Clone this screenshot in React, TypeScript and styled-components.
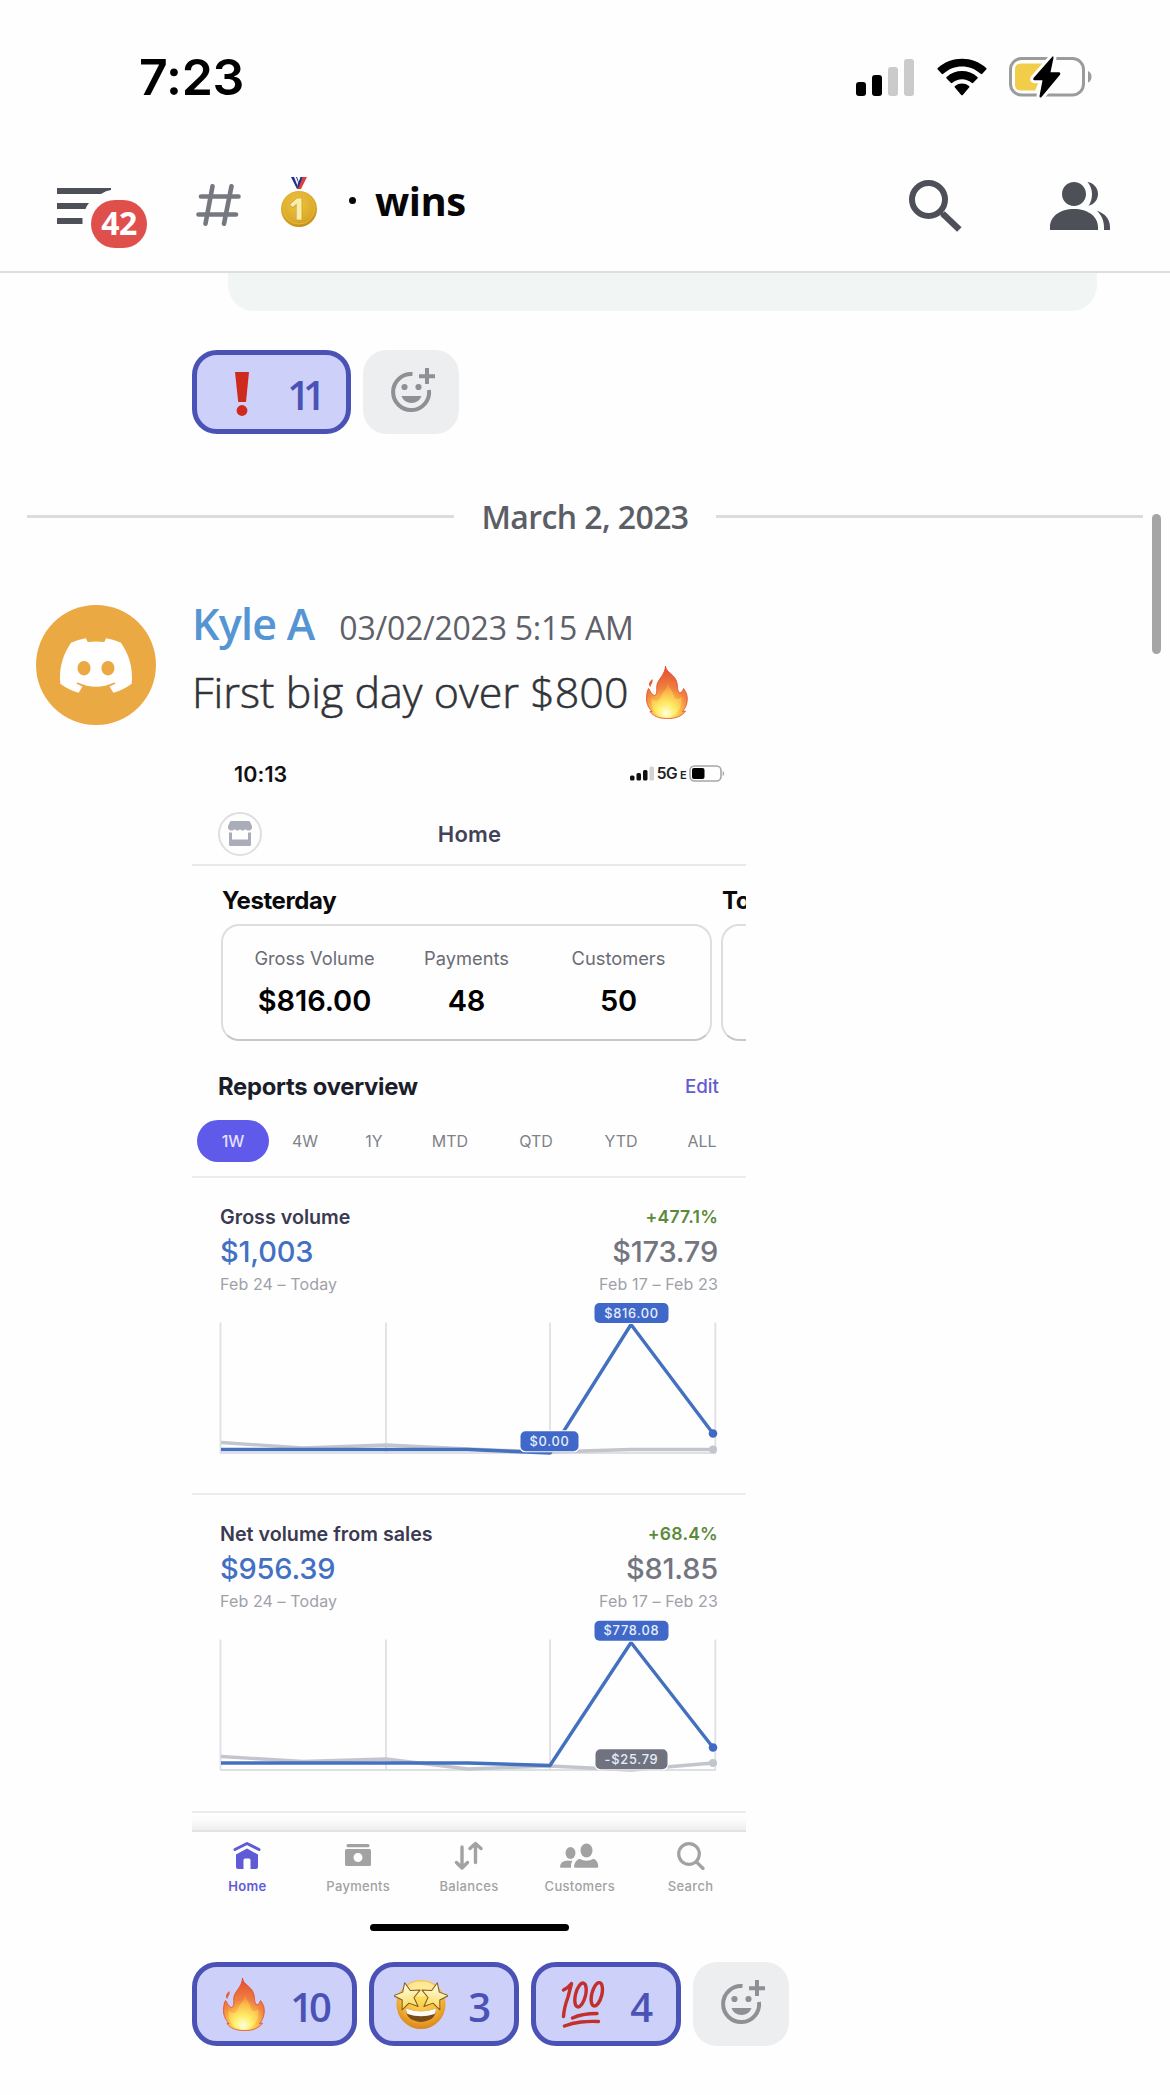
import React from "react";
import styled, { createGlobalStyle } from "styled-components";

const GlobalStyle = createGlobalStyle`
  * { box-sizing: border-box; }
  html, body { margin: 0; background: #fff; }
  body { font-family: "Open Sans", "Noto Sans", sans-serif; }
  svg { display: block; flex: none; }
`;

const ui = `Inter, "Liberation Sans", sans-serif`;

const Screen = styled.div`
  position: relative;
  width: 1170px;
  height: 2095px;
  overflow: hidden;
  background: #fefefe;
`;

/* ---------- phone status bar ---------- */

const StatusBar = styled.div`
  display: flex;
  align-items: center;
  justify-content: space-between;
  height: 137px;
  padding: 17px 75px 0 139px;
`;

const Clock = styled.span`
  font: 600 50px/60px ${ui};
  letter-spacing: -0.2px;
  color: #000;
`;

const StatusIcons = styled.div`
  display: flex;
  align-items: center;
  gap: 22.5px;
`;

/* ---------- channel header ---------- */

const Header = styled.header`
  display: flex;
  align-items: center;
  height: 136px;
  padding: 0 54px 0 57px;
  border-bottom: 2px solid #dddee0;
`;

const MenuButton = styled.div`
  position: relative;
  width: 90px;
  height: 72px;
`;

const Badge = styled.span`
  position: absolute;
  left: 34px;
  top: 32px;
  width: 56px;
  height: 48px;
  border-radius: 24px;
  background: #df504c;
  color: #fff;
  font: 700 32px/46px "Open Sans", sans-serif;
  letter-spacing: -0.5px;
  text-align: center;
`;

const HashSlot = styled.div`
  margin: 2px 0 0 49px;
`;

const MedalSlot = styled.div`
  margin: -4px 0 0 40px;
`;

const ChannelName = styled.h1`
  display: flex;
  margin: -6px 0 0 32px;
  gap: 19px;
  font: 700 40px/56px "Open Sans", sans-serif;
  letter-spacing: -0.5px;
  color: #060607;
`;

const ChannelDot = styled.span`
  width: 7px;
  height: 7px;
  margin-top: 24px;
  border-radius: 50%;
  background: #060607;
`;

const HeaderActions = styled.div`
  display: flex;
  align-items: center;
  gap: 69px;
  margin: 3px 0 0 auto;
`;

/* ---------- chat ---------- */

const EmbedTail = styled.div`
  width: 869px;
  height: 38px;
  margin-left: 228px;
  border-radius: 0 0 26px 26px;
  background: #f1f5f4;
`;

const Reactions = styled.div<{ $top: number }>`
  display: flex;
  gap: 12px;
  margin: ${(p) => p.$top}px 0 0 192px;
`;

const Reaction = styled.div<{ $width: number }>`
  display: flex;
  align-items: center;
  justify-content: space-between;
  width: ${(p) => p.$width}px;
  height: 84px;
  padding: 0 23px 0 19px;
  border: 5px solid #4b52b5;
  border-radius: 25px;
  background: #cdd0f8;
  color: #4b52b5;
`;

const EmojiSlot = styled.span<{ $shift?: number }>`
  display: flex;
  justify-content: center;
  width: 55px;
  padding-top: ${(p) => (p.$shift ? 4 : 0)}px;
  padding-right: ${(p) => p.$shift ?? 0}px;
`;

const Count = styled.span<{ $tight?: number }>`
  margin-right: ${(p) => (p.$tight ? p.$tight - 3 : 0)}px;
  padding-top: 5px;
  font: 600 40px/56px "Open Sans", sans-serif;
  letter-spacing: ${(p) => -(p.$tight ?? 0)}px;
`;

const AddReaction = styled.div`
  display: flex;
  justify-content: center;
  width: 96px;
  height: 84px;
  padding: 16px 0 0 2px;
  border-radius: 24px;
  background: #edeef0;
`;

const DateDivider = styled.div`
  display: flex;
  align-items: center;
  gap: 27px;
  height: 40px;
  margin: 62px 27px 0;
  font: 600 32px/40px "Open Sans", sans-serif;
  letter-spacing: -0.6px;
  color: #5c5e66;
  &::before,
  &::after {
    content: "";
    flex: 1;
    height: 3px;
    background: #dcdcde;
  }
`;

const DateLabel = styled.span`
  padding-top: 1px;
`;

const Message = styled.article`
  display: flex;
  gap: 36px;
  margin: 61px 0 0 36px;
`;

const Avatar = styled.div`
  display: flex;
  align-items: center;
  justify-content: center;
  width: 120px;
  height: 120px;
  margin-top: 8px;
  border-radius: 50%;
  background: #eaa942;
`;

const Author = styled.div`
  display: flex;
  align-items: baseline;
  gap: 25px;
  height: 52px;
  padding-top: 1px;
`;

const AuthorName = styled.span`
  font: 600 43px/52px "Open Sans", sans-serif;
  letter-spacing: -0.75px;
  color: #5595d3;
`;

const Timestamp = styled.time`
  font: 400 32px/52px "Open Sans", sans-serif;
  letter-spacing: -0.25px;
  color: #5f6168;
`;

const MessageText = styled.p`
  display: flex;
  align-items: center;
  gap: 18px;
  height: 60px;
  margin: 13px 0 23px;
  font: 300 43px/60px "Open Sans", sans-serif;
  -webkit-text-stroke: 0.55px #313338;
  color: #313338;
`;

const ScrollThumb = styled.div`
  position: absolute;
  right: 9px;
  top: 514px;
  width: 9px;
  height: 140px;
  border-radius: 5px;
  background: #a5a5a5;
`;

/* ---------- attached phone capture ---------- */

const Attachment = styled.section`
  width: 554px;
  height: 1201px;
  overflow: hidden;
  font-family: ${ui};
  background: #fefefe;
`;

const MiniStatus = styled.div`
  display: flex;
  align-items: center;
  justify-content: space-between;
  height: 57px;
  padding: 0 21px 0 42px;
`;

const MiniClock = styled.span`
  font: 600 21.5px/28px ${ui};
  letter-spacing: 0.1px;
  color: #111;
`;

const MiniIcons = styled.div`
  display: flex;
  align-items: center;
  gap: 3px;
`;

const Network = styled.span`
  font: 600 15.5px/18px ${ui};
  letter-spacing: -0.6px;
  color: #222;
  padding-top: 2px;
  small {
    margin-left: 3px;
    font-size: 11px;
  }
`;

const NavBar = styled.div`
  display: grid;
  grid-template-columns: 1fr auto 1fr;
  align-items: center;
  height: 64px;
  padding: 2px 26px 0;
  border-bottom: 2px solid #e8e9eb;
`;

const StoreButton = styled.div`
  display: flex;
  align-items: center;
  justify-content: center;
  width: 44px;
  height: 44px;
  border: 2px solid #dddfe4;
  border-radius: 50%;
`;

const NavTitle = styled.h2`
  margin: -1px 0 0 1px;
  font: 600 22px/30px ${ui};
  letter-spacing: 0.2px;
  color: #42435a;
`;

const Carousel = styled.div`
  display: flex;
  gap: 9px;
  height: 205px;
  padding: 19px 0 0 29px;
`;

const Slide = styled.div`
  flex: none;
  width: 491px;
`;

const SlideTitle = styled.h3`
  margin: 0 0 8px 1px;
  font: 700 24px/31px ${ui};
  letter-spacing: -0.4px;
  color: #0a0a0c;
`;

const Card = styled.div`
  display: grid;
  grid-template-columns: repeat(3, 152px);
  justify-content: center;
  height: 117px;
  padding-top: 20px;
  border: 2px solid #dcdee1;
  border-bottom-color: #c6c9cc;
  border-radius: 18px;
`;

const Stat = styled.div`
  display: flex;
  flex-direction: column;
  align-items: center;
  gap: 12px;
`;

const StatLabel = styled.span`
  font: 400 18.3px/24px ${ui};
  color: #6a6c75;
`;

const StatValue = styled.span`
  font: 600 29px/37px ${ui};
  letter-spacing: -0.1px;
  color: #000;
`;

const ReportsHeader = styled.div`
  display: flex;
  align-items: center;
  justify-content: space-between;
  height: 31px;
  padding: 0 27px 0 26px;
`;

const ReportsTitle = styled.h3`
  margin: 0;
  font: 700 23.8px/31px ${ui};
  letter-spacing: -0.25px;
  color: #1c1d2b;
`;

const EditLink = styled.a`
  font: 500 18.8px/31px ${ui};
  color: #625dcf;
`;

const Ranges = styled.div`
  display: grid;
  grid-template-columns: 72px 72px 66px 86px 86px 84px 78px;
  align-items: start;
  height: 76px;
  padding: 18px 5px 0;
  border-bottom: 2px solid #ebecee;
`;

const Range = styled.span<{ $active?: boolean }>`
  height: 42px;
  border-radius: 21px;
  background: ${(p) => (p.$active ? "#605aea" : "transparent")};
  font: ${(p) => (p.$active ? 500 : 400)} 16px/43px ${ui};
  color: ${(p) => (p.$active ? "#e3e1ff" : "#808289")};
  text-align: center;
`;

const Report = styled.div<{ $height: number }>`
  height: ${(p) => p.$height}px;
  padding-top: 27px;
  border-bottom: 2px solid #ebecee;
`;

const ReportHead = styled.div`
  display: flex;
  justify-content: space-between;
  height: 93px;
  padding: 0 28px;
`;

const Figure = styled.div<{ $end?: boolean }>`
  display: flex;
  flex-direction: column;
  align-items: ${(p) => (p.$end ? "flex-end" : "flex-start")};
`;

const FigureTitle = styled.span`
  font: 600 19.7px/24px ${ui};
  color: #3b3a52;
`;

const Change = styled.span`
  font: 600 17.6px/24px ${ui};
  letter-spacing: 0.2px;
  color: #5c8a3c;
`;

const Amount = styled.span<{ $muted?: boolean }>`
  margin: 4px 0 2px;
  font: 500 29px/37px ${ui};
  letter-spacing: -0.2px;
  color: ${(p) => (p.$muted ? "#73757f" : "#4470c4")};
`;

const Period = styled.span`
  font: 400 16px/24px ${ui};
  letter-spacing: 0.12px;
  color: #9fa1aa;
`;

const TabShadow = styled.div`
  height: 19px;
  border-bottom: 2px solid #e2e2e2;
  background: linear-gradient(#fefefe, #fcfcfc 40%, #eeeeee);
`;

const TabBar = styled.nav`
  display: grid;
  grid-template-columns: repeat(5, 1fr);
  height: 92px;
  padding-top: 8px;
`;

const TabItem = styled.div<{ $active?: boolean }>`
  display: flex;
  flex-direction: column;
  align-items: center;
  gap: 8px;
  color: ${(p) => (p.$active ? "#5f5bd6" : "#a2a2a2")};
  font: ${(p) => (p.$active ? 600 : 500)} 13px/16px ${ui};
  letter-spacing: 0.3px;
`;

const HomeIndicator = styled.div`
  width: 199px;
  height: 7px;
  margin: 0 auto;
  border-radius: 4px;
  background: #000;
`;

/* ---------- drawings ---------- */

const SignalIcon = () => (
  <svg width="58" height="38" viewBox="0 0 58 38">
    <rect x="0" y="24" width="10" height="14" rx="3" />
    <rect x="16" y="17" width="10" height="21" rx="3" />
    <rect x="32" y="9" width="10" height="29" rx="3" fill="#cbcbcb" />
    <rect x="48" y="1" width="10" height="37" rx="3" fill="#cbcbcb" />
  </svg>
);

const WifiIcon = () => (
  <svg width="50" height="38" viewBox="0 0 50 38">
    <path d="M0.8 11.6Q0 10.8 0.8 10C14.5-2.3 35.500-2.3 49.200 10Q50 10.800 49.200 11.600L45.300 15.800Q44.500 16.500 43.700 15.800C33 6 17 6 6.300 15.800Q5.500 16.500 4.700 15.800Z" />
    <path d="M9.600 20.500Q8.700 19.700 9.600 18.900C18.300 11 31.700 11 40.400 18.900Q41.300 19.700 40.400 20.500L36.200 24.800Q35.400 25.500 34.600 24.800C29.200 20 20.800 20 15.400 24.800Q14.600 25.500 13.800 24.800Z" />
    <path d="M17.900 29.600Q17 28.700 18 27.900C22 24.600 28 24.600 32 27.900Q33 28.700 32.100 29.600L25.800 37Q25 37.700 24.200 37Z" />
  </svg>
);

const BatteryIcon = () => (
  <svg width="86" height="44" viewBox="0 0 86 44">
    <rect x="1.500" y="3.500" width="73" height="36.500" rx="11" fill="none" stroke="#9b9b9b" strokeWidth="3" />
    <path d="M79 16q3.500 1.500 3.500 5.800t-3.500 5.800z" fill="#9b9b9b" />
    <path d="M12 8.500h26l-12 27H12q-6 0-6-6v-15q0-6 6-6z" fill="#f1cd49" />
    <path
      d="M43.500 1.500L24.500 23q-1 2 1 2.300h8L30.500 41q0 2.500 2 1L51 19.700q1-2-1-2.500h-8.500L44.500 3q0-2.500-1-1.500z"
      stroke="#fff"
      strokeWidth="6"
      strokeLinejoin="round"
      paintOrder="stroke"
    />
  </svg>
);

const MenuIcon = () => (
  <svg width="90" height="72" viewBox="0 0 90 72" fill="#4e5058">
    <path d="M0 20h54v2q-5 .5-10 4H0zM0 35h32q-2.500 3-3.500 6H0zM0 50h25.500v6H0z" />
  </svg>
);

const HashIcon = () => (
  <svg width="45" height="42" viewBox="0 0 45 42" stroke="#76787f" strokeWidth="4.600" strokeLinecap="round" fill="none">
    <path d="M16.500 2.300L9.500 39.700M35.500 2.300L28 39.700M5 12.500H42.500M2.500 30.500H40" />
  </svg>
);

const MedalEmoji = () => (
  <svg width="36" height="50" viewBox="0 0 36 50">
    <defs>
      <radialGradient id="gold" cx=".45" cy=".35" r=".7">
        <stop offset="0" stopColor="#efc640" />
        <stop offset=".7" stopColor="#dba928" />
        <stop offset="1" stopColor="#bb8412" />
      </radialGradient>
    </defs>
    <path d="M10 0h6l4 12h-4z" fill="#1d2f86" />
    <path d="M13 0h2l4 10h-2z" fill="#f1f1f8" />
    <path d="M26 0h-5l-5 12h4z" fill="#d9413f" />
    <path d="M21.500 0h-2l-3 8 1 3z" fill="#1d2f86" />
    <circle cx="18" cy="32" r="18" fill="url(#gold)" />
    <circle cx="18" cy="31.500" r="15.500" fill="none" stroke="#e5ba42" strokeWidth="1" />
    <text x="16" y="42.500" textAnchor="middle" fontFamily="Open Sans" fontWeight="800" fontSize="30" fill="#fbeda6" stroke="#c9982c" strokeWidth=".7">
      1
    </text>
  </svg>
);

const SearchIcon = () => (
  <svg width="72" height="72" viewBox="0 0 72 72" fill="none" stroke="#4e5058">
    <circle cx="25.500" cy="29.500" r="16.500" strokeWidth="6" />
    <path d="M39.500 43.500L56.300 59.500" strokeWidth="6.500" />
    <path d="M35.500 40.500l5 4.500" strokeWidth="3.500" />
  </svg>
);

const MembersIcon = () => (
  <svg width="72" height="72" viewBox="0 0 24 24" fill="#4e5058">
    <path d="M14 8.006C14 10.211 12.206 12.006 10 12.006S6 10.211 6 8.006 7.794 4.006 10 4.006s4 1.795 4 4zM2 19.006c0-3.533 3.290-6 8-6 4.711 0 8 2.467 8 6v1H2v-1z" />
    <path d="M20 20.006h2v-1c0-2.563-1.730-4.565-4.479-5.471C19.062 14.913 20 16.806 20 19.006v1z" />
    <path d="M14.883 11.908C16.666 11.504 18 9.908 18 8.006c0-2.037-1.531-3.724-3.503-3.972C15.432 5.108 16 6.491 16 8.006c0 1.490-.422 2.817-1.117 3.902z" />
  </svg>
);

const ExclamationEmoji = () => (
  <svg width="14" height="44" viewBox="0 0 14 44" fill="#cf2a1e">
    <path d="M0 0h14l-3 30H3.200z" />
    <circle cx="7" cy="38.500" r="5.400" />
  </svg>
);

const AddReactionIcon = () => (
  <svg width="48" height="48" viewBox="0 0 48 48" fill="#8e9094">
    <path d="M24.500 8.100A18 18 0 1 0 41 24" fill="none" stroke="#8e9094" strokeWidth="4" />
    <circle cx="16.500" cy="21" r="3.100" />
    <circle cx="30.500" cy="21" r="3.100" />
    <path d="M13.500 30h20q-2.500 7-10 7t-10-7z" />
    <path d="M37 2h4v6.200h6v4h-6V18h-4v-5.800h-6v-4h6z" />
  </svg>
);

const DiscordLogo = () => (
  <svg width="72" height="55" viewBox="0 0 127.14 96.36" fill="#fff">
    <path d="M107.7,8.07A105.15,105.15,0,0,0,81.47,0a72.06,72.06,0,0,0-3.36,6.83A97.68,97.68,0,0,0,49,6.83,72.37,72.37,0,0,0,45.64,0,105.89,105.89,0,0,0,19.39,8.09C2.79,32.65-1.71,56.6.54,80.21h0A105.73,105.73,0,0,0,32.71,96.36,77.7,77.7,0,0,0,39.6,85.25a68.42,68.42,0,0,1-10.85-5.18c.91-.66,1.8-1.34,2.66-2a75.57,75.57,0,0,0,64.32,0c.87.71,1.76,1.39,2.66,2a68.68,68.68,0,0,1-10.87,5.19,77,77,0,0,0,6.89,11.1A105.25,105.25,0,0,0,126.6,80.22h0C129.24,52.84,122.09,29.11,107.7,8.07ZM42.45,65.69C36.18,65.69,31,60,31,53s5-12.74,11.43-12.74S54,46,53.89,53,48.84,65.69,42.45,65.69Zm42.24,0C78.41,65.69,73.25,60,73.25,53s5-12.74,11.44-12.74S96.23,46,96.12,53,91.08,65.69,84.69,65.69Z" />
  </svg>
);

const FireEmoji = () => (
  <svg width="42" height="53" viewBox="0 0 42 53">
    <defs>
      <radialGradient id="flame" gradientUnits="userSpaceOnUse" cx="20" cy="46" r="44">
        <stop offset="0" stopColor="#fffbd0" />
        <stop offset=".16" stopColor="#ffe95f" />
        <stop offset=".36" stopColor="#f9b545" />
        <stop offset=".55" stopColor="#f08040" />
        <stop offset="1" stopColor="#e4502f" />
      </radialGradient>
      <radialGradient id="flameCore" gradientUnits="userSpaceOnUse" cx="20" cy="47" r="30">
        <stop offset="0" stopColor="#fffde0" />
        <stop offset=".3" stopColor="#ffef6a" />
        <stop offset=".7" stopColor="#fbb94a" />
        <stop offset="1" stopColor="#f08a42" stopOpacity=".6" />
      </radialGradient>
    </defs>
    <path
      d="M19.500 0C20 6 27.500 8 30 14C32.500 19 30.500 23 33 26.500C35.500 27.500 36.500 25 37.500 22.500C40.500 26 42 31 41 36C40.500 40 38.500 43 36.500 45.500L39.500 45C36 50.500 28 53 20.500 52.500C13 52.500 7 50 4 45.500L6 45.500C2 41.500 0 36 .5 31C.8 28 1 25 2.500 22.500C4 23.500 4.500 28 8.500 29.500C12.500 28 9.500 22 11.500 17C13.500 12 19 8 19.500 0Z"
      fill="url(#flame)"
      stroke="#e2492d"
      strokeWidth=".8"
    />
    <path d="M22 17C24 23 27 25 28 31C29 34 33 34 35 31C37 40 32 51 20.500 51.500C9 51 4 41 6 32C8 36 13 36 15 31C16 26 21 24 22 17Z" fill="url(#flameCore)" />
    <path d="M6.500 13C7.500 17 4.500 18 4.500 21C2 19.500 2.500 16 6.500 13Z" fill="#ea5a3c" />
  </svg>
);

const star = "M0-13.500L3.900-4.800L13.500-3.200L6 2.800L8.200 12.500L0 7.300L-8.200 12.500L-6 2.800L-13.500-3.200L-3.900-4.800Z";

const StarEyesEmoji = () => (
  <svg width="54" height="49" viewBox="0 0 54 49">
    <defs>
      <radialGradient id="face" cx=".5" cy=".3" r=".7">
        <stop offset="0" stopColor="#ffe56a" />
        <stop offset=".6" stopColor="#f8b93b" />
        <stop offset="1" stopColor="#d98518" />
      </radialGradient>
      <linearGradient id="starFill" x1="0" y1="0" x2="0" y2="1">
        <stop offset="0" stopColor="#fffef0" />
        <stop offset="1" stopColor="#f9dc5a" />
      </linearGradient>
    </defs>
    <circle cx="27" cy="24.500" r="24.500" fill="url(#face)" />
    <ellipse cx="27" cy="9" rx="15" ry="7.500" fill="#fff3b4" opacity=".7" />
    <path d="M12 28.500Q27 34 42 28.500Q42.500 40.500 27 42Q11.500 40.500 12 28.500Z" fill="#7b4a19" />
    <path d="M12 28.500Q27 34 42 28.500Q42 32 40.500 34Q27 38.500 13.500 34Q12 32 12 28.500Z" fill="#fdfbf2" />
    <g fill="url(#starFill)" stroke="#80571b" strokeWidth="1" strokeLinejoin="round">
      <path d={star} transform="translate(13.500 16) rotate(-12)" />
      <path d={star} transform="translate(40.500 16) rotate(12)" />
    </g>
  </svg>
);

const HundredEmoji = () => (
  <svg width="44" height="47" viewBox="-1 0 44 47" fill="none" stroke="#c32f2b" strokeLinecap="round" strokeLinejoin="round">
    <path d="M1.500 9Q6 7 9.500 2.500L6 16Q2 27 1.500 35.500" strokeWidth="3.400" />
    <ellipse cx="18.500" cy="14" rx="5" ry="12.300" transform="rotate(14 18.500 14)" strokeWidth="3.400" />
    <ellipse cx="34.800" cy="13.300" rx="5" ry="12" transform="rotate(14 34.800 13.300)" strokeWidth="3.400" />
    <path d="M10.500 37Q20 32.500 35 32.500M2.500 45Q10 42 19 41Q28 40 36.500 40.500" strokeWidth="3.400" />
  </svg>
);

const MiniSignal = () => (
  <svg width="24" height="15" viewBox="0 0 24 15" fill="#111">
    <rect x="0" y="9.500" width="4.500" height="5" rx="1.500" />
    <rect x="6.500" y="7" width="4.500" height="7.500" rx="1.500" />
    <rect x="13" y="4" width="4.500" height="10.500" rx="1.500" />
    <rect x="19.500" y="0.500" width="4.500" height="14" rx="1.500" fill="#d3d3d3" />
  </svg>
);

const MiniBattery = () => (
  <svg width="36" height="17" viewBox="0 0 36 17">
    <rect x="1" y="1" width="31" height="15" rx="4.500" fill="none" stroke="#a6a6a6" strokeWidth="1.600" />
    <rect x="3" y="3" width="12.500" height="11" rx="2" fill="#000" />
    <path d="M33.700 6q1.500.5 1.500 2.500t-1.500 2.500z" fill="#a6a6a6" />
  </svg>
);

const StoreIcon = () => (
  <svg width="26" height="26" viewBox="0 0 26 26" fill="#a9adb9">
    <path d="M3.500 0h19L25 5q.5 4-3 4.500-2.500.3-3.500-1.500-1.500 2-3.500 1.500-1.500-.3-2-1.500-.5 1.200-2 1.500-2 .5-3.500-1.500Q6.500 9.800 4 9.500.5 9 1 5z" />
    <path d="M2 11.500h3V18.500h16V11.500h3V23.500q0 1.500-1.500 1.500h-19Q2 25 2 23.500z" />
  </svg>
);

const TabHome = () => (
  <svg width="30" height="30" viewBox="0 0 30 30" fill="currentColor">
    <path d="M3 9.500L15 3.500L27 9.500" fill="none" stroke="currentColor" strokeWidth="3" strokeLinecap="round" strokeLinejoin="round" />
    <path d="M4 14.500L15 8.500l11 6V27q0 2-2 2h-5.500V20q0-1.500-1.500-1.500h-4q-1.500 0-1.500 1.500v9H6q-2 0-2-2z" />
  </svg>
);

const TabPayments = () => (
  <svg width="30" height="30" viewBox="0 0 30 30" fill="currentColor">
    <rect x="3.500" y="4" width="23" height="3.300" rx="1.500" />
    <path fillRule="evenodd" d="M3.500 9h23q1.500 0 1.500 1.500v14q0 1.500-1.500 1.500h-23Q2 26 2 24.500v-14Q2 9 3.500 9zM15 13a4.500 4.500 0 1 0 0 9a4.500 4.500 0 1 0 0-9z" />
  </svg>
);

const TabBalances = () => (
  <svg width="30" height="30" viewBox="0 0 30 30" fill="none" stroke="currentColor" strokeWidth="3.400" strokeLinecap="round" strokeLinejoin="round">
    <path d="M8 7v20.500M2.500 22.500l5.500 5.500 5.500-5.500M21.500 22.500V4M16 8.500L21.500 3.500l5.500 5" />
  </svg>
);

const TabCustomers = () => (
  <svg width="40" height="30" viewBox="1 0 40 30" fill="currentColor">
    <ellipse cx="11.500" cy="13" rx="5" ry="6" />
    <ellipse cx="27.500" cy="10.500" rx="6" ry="7" />
    <path d="M13.500 20.500Q11.500 21 9 20.500 1.500 20.500 1 26.500q0 1.300 1.200 1.300H12Q11.500 23.500 13.500 20.500z" />
    <path d="M20.500 18.800Q27.500 22.500 34.500 18.800 39 20.500 39.300 26.500 39.300 27.800 38 27.800H16.500Q15 27.800 15 26.500 15.500 21 20.500 18.800z" />
  </svg>
);

const TabSearch = () => (
  <svg width="30" height="30" viewBox="0 0 30 30" fill="none" stroke="currentColor" strokeWidth="3.200" strokeLinecap="round">
    <circle cx="13" cy="14" r="10.300" />
    <path d="M20.500 22l6.500 6.500" />
  </svg>
);

/* ---------- report chart ---------- */

type Point = [number, number];
type Pill = { x: number; y: number; w: number; text: string; color: string };

const toPath = (pts: Point[]) => "M" + pts.map((p) => p.join(" ")).join("L");

const Chart = ({ current, previous, pills }: { current: Point[]; previous: Point[]; pills: Pill[] }) => {
  const lastCur = current[current.length - 1];
  const lastPrev = previous[previous.length - 1];
  return (
    <svg width="554" height="170" viewBox="0 0 554 170">
      <path d="M28.500 24.500V155M194 24.500V155M358 24.500V155M523.300 24.500V155M28 155H524" stroke="#dfe0e5" strokeWidth="1.800" fill="none" />
      <path d={toPath(previous)} stroke="#c3c5cc" strokeWidth="3.300" fill="none" strokeLinejoin="round" />
      <circle cx={lastPrev[0]} cy={lastPrev[1]} r="4" fill="#c3c5cc" />
      <path d={toPath(current)} stroke="#4470c0" strokeWidth="3.400" fill="none" strokeLinejoin="round" />
      <circle cx={lastCur[0]} cy={lastCur[1]} r="4.300" fill="#4068c4" />
      {pills.map((p) => (
        <g key={p.text}>
          <rect x={p.x - p.w / 2 - 1} y={p.y - 11} width={p.w + 2} height="22" rx="5.500" fill="#fefefe" />
          <rect x={p.x - p.w / 2} y={p.y - 10} width={p.w} height="20" rx="5" fill={p.color} />
          <text x={p.x} y={p.y + 4.700} textAnchor="middle" fontFamily="Inter, sans-serif" fontWeight="500" fontSize="12.800" letterSpacing=".75" fill="#e6edfb">
            {p.text}
          </text>
        </g>
      ))}
    </svg>
  );
};

const reports = [
  {
    title: "Gross volume",
    amount: "$1,003",
    change: "+477.1%",
    before: "$173.79",
    height: 317,
    current: [[29, 151.500], [276, 151.500], [358, 155], [439, 26.500], [521, 135.500]] as Point[],
    previous: [[29, 144.500], [111, 150], [194, 147], [276, 151], [358, 154], [439, 151.500], [521, 151.500]] as Point[],
    pills: [
      { x: 439.500, y: 15, w: 74, text: "$816.00", color: "#4068c8" },
      { x: 357.500, y: 143.300, w: 58, text: "$0.00", color: "#4068c8" },
    ],
  },
  {
    title: "Net volume from sales",
    amount: "$956.39",
    change: "+68.4%",
    before: "$81.85",
    height: 318,
    current: [[29, 148], [276, 148], [358, 150.500], [439, 27.500], [521, 132.500]] as Point[],
    previous: [[29, 141.500], [111, 146.500], [194, 144], [276, 154], [358, 151], [439, 155], [521, 148]] as Point[],
    pills: [
      { x: 439.500, y: 15.700, w: 74, text: "$778.08", color: "#4068c8" },
      { x: 439.500, y: 144.300, w: 72, text: "-$25.79", color: "#70737f" },
    ],
  },
];

const ranges = ["1W", "4W", "1Y", "MTD", "QTD", "YTD", "ALL"];

const tabs = [
  { label: "Home", Icon: TabHome },
  { label: "Payments", Icon: TabPayments },
  { label: "Balances", Icon: TabBalances },
  { label: "Customers", Icon: TabCustomers },
  { label: "Search", Icon: TabSearch },
];

const StripeCapture = () => (
  <Attachment>
    <MiniStatus>
      <MiniClock>10:13</MiniClock>
      <MiniIcons>
        <MiniSignal />
        <Network>
          5G<small>E</small>
        </Network>
        <MiniBattery />
      </MiniIcons>
    </MiniStatus>
    <NavBar>
      <StoreButton>
        <StoreIcon />
      </StoreButton>
      <NavTitle>Home</NavTitle>
    </NavBar>
    <Carousel>
      <Slide>
        <SlideTitle>Yesterday</SlideTitle>
        <Card>
          <Stat>
            <StatLabel>Gross Volume</StatLabel>
            <StatValue>$816.00</StatValue>
          </Stat>
          <Stat>
            <StatLabel>Payments</StatLabel>
            <StatValue>48</StatValue>
          </Stat>
          <Stat>
            <StatLabel>Customers</StatLabel>
            <StatValue>50</StatValue>
          </Stat>
        </Card>
      </Slide>
      <Slide>
        <SlideTitle>To</SlideTitle>
        <Card />
      </Slide>
    </Carousel>
    <ReportsHeader>
      <ReportsTitle>Reports overview</ReportsTitle>
      <EditLink>Edit</EditLink>
    </ReportsHeader>
    <Ranges>
      {ranges.map((r, i) => (
        <Range key={r} $active={i === 0}>
          {r}
        </Range>
      ))}
    </Ranges>
    {reports.map((r) => (
      <Report key={r.title} $height={r.height}>
        <ReportHead>
          <Figure>
            <FigureTitle>{r.title}</FigureTitle>
            <Amount>{r.amount}</Amount>
            <Period>Feb 24 – Today</Period>
          </Figure>
          <Figure $end>
            <Change>{r.change}</Change>
            <Amount $muted>{r.before}</Amount>
            <Period>Feb 17 – Feb 23</Period>
          </Figure>
        </ReportHead>
        <Chart current={r.current} previous={r.previous} pills={r.pills} />
      </Report>
    ))}
    <TabShadow />
    <TabBar>
      {tabs.map(({ label, Icon }, i) => (
        <TabItem key={label} $active={i === 0}>
          <Icon />
          {label}
        </TabItem>
      ))}
    </TabBar>
    <HomeIndicator />
  </Attachment>
);

export default function App() {
  return (
    <>
      <GlobalStyle />
      <Screen>
        <StatusBar>
          <Clock>7:23</Clock>
          <StatusIcons>
            <SignalIcon />
            <WifiIcon />
            <BatteryIcon />
          </StatusIcons>
        </StatusBar>
        <Header>
          <MenuButton>
            <MenuIcon />
            <Badge>42</Badge>
          </MenuButton>
          <HashSlot>
            <HashIcon />
          </HashSlot>
          <MedalSlot>
            <MedalEmoji />
          </MedalSlot>
          <ChannelName>
            <ChannelDot />
            wins
          </ChannelName>
          <HeaderActions>
            <SearchIcon />
            <MembersIcon />
          </HeaderActions>
        </Header>
        <EmbedTail />
        <Reactions $top={39}>
          <Reaction $width={159}>
            <EmojiSlot $shift={4}>
              <ExclamationEmoji />
            </EmojiSlot>
            <Count $tight={7}>11</Count>
          </Reaction>
          <AddReaction>
            <AddReactionIcon />
          </AddReaction>
        </Reactions>
        <DateDivider>
          <DateLabel>March 2, 2023</DateLabel>
        </DateDivider>
        <Message>
          <Avatar>
            <DiscordLogo />
          </Avatar>
          <div>
            <Author>
              <AuthorName>Kyle A</AuthorName>
              <Timestamp>03/02/2023 5:15 AM</Timestamp>
            </Author>
            <MessageText>
              First big day over $800
              <FireEmoji />
            </MessageText>
            <StripeCapture />
          </div>
        </Message>
        <Reactions $top={16}>
          <Reaction $width={165}>
            <EmojiSlot>
              <FireEmoji />
            </EmojiSlot>
            <Count $tight={4}>10</Count>
          </Reaction>
          <Reaction $width={150}>
            <EmojiSlot>
              <StarEyesEmoji />
            </EmojiSlot>
            <Count>3</Count>
          </Reaction>
          <Reaction $width={150}>
            <EmojiSlot>
              <HundredEmoji />
            </EmojiSlot>
            <Count>4</Count>
          </Reaction>
          <AddReaction>
            <AddReactionIcon />
          </AddReaction>
        </Reactions>
        <ScrollThumb />
      </Screen>
    </>
  );
}
